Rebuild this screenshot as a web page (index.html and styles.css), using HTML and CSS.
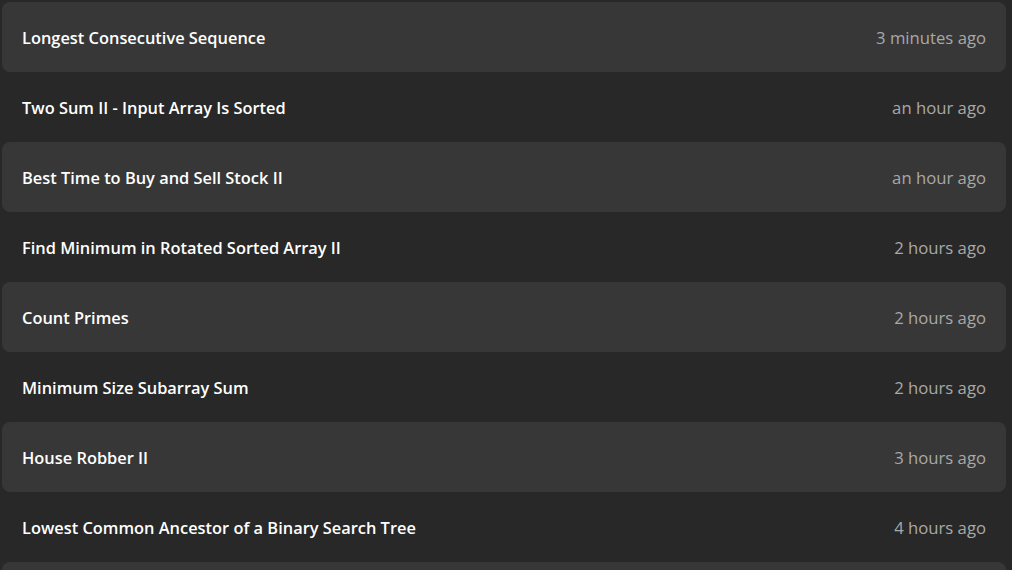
FILE: index.html
```html
<!DOCTYPE html>
<html lang="en">
<head>
    <meta charset="utf-8">
    <title>Recent Submissions</title>
    <link rel="stylesheet" href="styles.css">
</head>
<body>

    <!-- Lista de envios recientes -->
    <div class="submission-list">
        <div class="submission-row">
            <span class="problem-title">Longest Consecutive Sequence</span>
            <span class="time-ago">3 minutes ago</span>
        </div>
        <div class="submission-row">
            <span class="problem-title">Two Sum II - Input Array Is Sorted</span>
            <span class="time-ago">an hour ago</span>
        </div>
        <div class="submission-row">
            <span class="problem-title">Best Time to Buy and Sell Stock II</span>
            <span class="time-ago">an hour ago</span>
        </div>
        <div class="submission-row">
            <span class="problem-title">Find Minimum in Rotated Sorted Array II</span>
            <span class="time-ago">2 hours ago</span>
        </div>
        <div class="submission-row">
            <span class="problem-title">Count Primes</span>
            <span class="time-ago">2 hours ago</span>
        </div>
        <div class="submission-row">
            <span class="problem-title">Minimum Size Subarray Sum</span>
            <span class="time-ago">2 hours ago</span>
        </div>
        <div class="submission-row">
            <span class="problem-title">House Robber II</span>
            <span class="time-ago">3 hours ago</span>
        </div>
        <div class="submission-row">
            <span class="problem-title">Lowest Common Ancestor of a Binary Search Tree</span>
            <span class="time-ago">4 hours ago</span>
        </div>
        <!-- siguiente fila, solo se ve el borde superior -->
        <div class="submission-row"></div>
    </div>

</body>
</html>
```

FILE: styles.css
```css
body {
    font-family: "Open Sans", "Noto Sans", sans-serif;
    background-color: #282828;
    margin: 0;
    padding: 0;
    overflow: hidden;
}

.submission-list {
    display: flex;
    flex-direction: column;
    padding: 2px 6px 0 2px;
}

.submission-row {
    display: flex;
    align-items: center;
    justify-content: space-between;
    flex-shrink: 0;
    height: 70px;
    padding: 0 20px;
    border-radius: 8px;
}

.submission-row:nth-child(odd) {
    background-color: #373737;
}

.problem-title {
    color: #fff;
    font-size: 16.4px;
    font-weight: 600;
}

.time-ago {
    color: #a8a8a8;
    font-size: 16.7px;
}
```
